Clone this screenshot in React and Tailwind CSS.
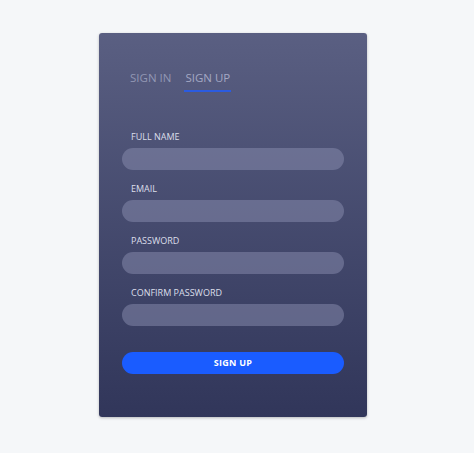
const fields = ["Full Name", "Email", "Password", "Confirm Password"];

export default function App() {
    return (
        <div className="min-h-[453px] w-[474px] bg-[#f5f7f9] pt-[33px] pl-[99px] font-['Open_Sans',sans-serif]">
            <div className="w-[268px] h-[384px] rounded-[3px] bg-gradient-to-b from-[#5a5f82] to-[#31365a] shadow-[0_1px_3px_rgba(0,0,0,0.25)] px-[23px] pt-[37px]">
                <div className="flex items-start gap-[13px] pl-[8px]">
                    <button className="text-[11.5px] leading-[16px] text-[#9297b4]">SIGN IN</button>
                    <button className="text-[11.5px] leading-[16px] text-[#a4a8c4] px-[1px] pb-[4px] border-b-2 border-[#2b5be0]">
                        SIGN UP
                    </button>
                </div>
                <form className="mt-[39px] flex flex-col gap-[13px]">
                    {fields.map((f) => (
                        <div key={f} className="flex flex-col gap-[5px]">
                            <label className="pl-[9px] text-[9px] leading-[12px] uppercase text-[#dcdfea]">{f}</label>
                            <input className="h-[22px] w-full rounded-full bg-[#8a8eb0]/50 outline-none" />
                        </div>
                    ))}
                    <button
                        type="button"
                        className="mt-[13px] h-[22px] w-full rounded-full bg-[#1a5cff] text-[9px] font-bold text-white tracking-[0.3px]"
                    >
                        SIGN UP
                    </button>
                </form>
            </div>
        </div>
    );
}
